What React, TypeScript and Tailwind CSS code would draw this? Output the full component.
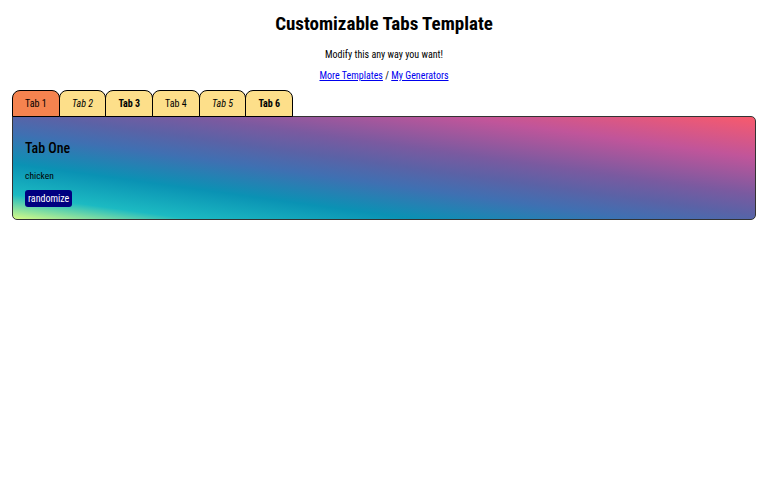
import React, { useState } from "react";

const tabs = [
  { label: "Tab 1", style: "" },
  { label: "Tab 2", style: "italic" },
  { label: "Tab 3", style: "font-bold" },
  { label: "Tab 4", style: "" },
  { label: "Tab 5", style: "italic" },
  { label: "Tab 6", style: "font-bold" },
];

export default function App() {
  const [active, setActive] = useState(0);
  return (
    <div
      className="min-h-screen bg-white text-black font-stretch-condensed"
      style={{ fontFamily: "Roboto, 'Liberation Sans', sans-serif" }}
    >
      <div className="flex flex-col items-center pt-[13px]">
        <h1 className="text-[19px] leading-[22px] font-bold">Customizable Tabs Template</h1>
        <p className="mt-[14px] text-[10px] leading-[12px]">Modify this any way you want!</p>
        <p className="mt-[9px] text-[10px] leading-[12px]">
          <a href="#" className="text-[#0000ee] underline">More Templates</a>
          {" / "}
          <a href="#" className="text-[#0000ee] underline">My Generators</a>
        </p>
      </div>
      <div className="px-3 mt-[8px]">
        <div className="flex">
          {tabs.map((t, i) => (
            <button
              key={t.label}
              onClick={() => setActive(i)}
              className={`w-[47.7px] h-[27px] -mr-px border border-black rounded-t-[8px] text-[10px] flex items-center justify-center ${t.style} ${
                active === i ? "bg-[#f5834f]" : "bg-[#fddf8a]"
              }`}
            >
              {t.label}
            </button>
          ))}
        </div>
        <div className="-mt-px h-[104px] border border-[#333] rounded-b-[5px] rounded-tr-[5px] bg-[linear-gradient(to_top_right,#d8fc86_0%,#1cbac2_12%,#0a92b4_27%,#3f70b2_42%,#5b62a6_52%,#7a5aa0_62%,#c0559a_80%,#f85a6c_100%)] px-3 pt-[22px]">
          <h2 className="text-[14px] leading-[18px] font-medium">Tab One</h2>
          <p className="mt-[13px] text-[9.5px] leading-[11px]">chicken</p>
          <button className="mt-[9px] bg-[#000080] text-white text-[10px] leading-[11px] px-[3px] py-[3px] rounded-[3px]">
            randomize
          </button>
        </div>
      </div>
    </div>
  );
}
